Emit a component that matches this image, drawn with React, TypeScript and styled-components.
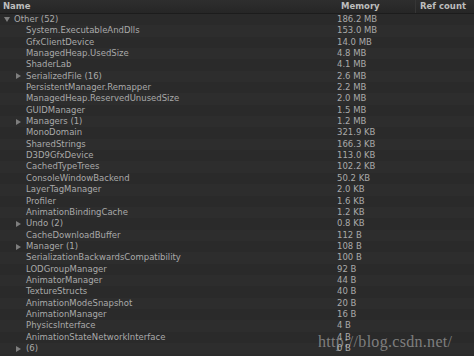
import styled, {createGlobalStyle} from "styled-components";

const GlobalStyle = createGlobalStyle`
  html, body {
    margin: 0;
    padding: 0;
    background: #2b2b2b;
  }
  body {
    font-family: "DejaVu Sans", Verdana, sans-serif;
  }
`;

type Item = {
    name: string
    mem: string
    depth: number
    fold?: "open" | "closed"
}

const items: Item[] = [
    {name: "Other (52)", mem: "186.2 MB", depth: 0, fold: "open"},
    {name: "System.ExecutableAndDlls", mem: "153.0 MB", depth: 1},
    {name: "GfxClientDevice", mem: "14.0 MB", depth: 1},
    {name: "ManagedHeap.UsedSize", mem: "4.8 MB", depth: 1},
    {name: "ShaderLab", mem: "4.1 MB", depth: 1},
    {name: "SerializedFile (16)", mem: "2.6 MB", depth: 1, fold: "closed"},
    {name: "PersistentManager.Remapper", mem: "2.2 MB", depth: 1},
    {name: "ManagedHeap.ReservedUnusedSize", mem: "2.0 MB", depth: 1},
    {name: "GUIDManager", mem: "1.5 MB", depth: 1},
    {name: "Managers (1)", mem: "1.2 MB", depth: 1, fold: "closed"},
    {name: "MonoDomain", mem: "321.9 KB", depth: 1},
    {name: "SharedStrings", mem: "166.3 KB", depth: 1},
    {name: "D3D9GfxDevice", mem: "113.0 KB", depth: 1},
    {name: "CachedTypeTrees", mem: "102.2 KB", depth: 1},
    {name: "ConsoleWindowBackend", mem: "50.2 KB", depth: 1},
    {name: "LayerTagManager", mem: "2.0 KB", depth: 1},
    {name: "Profiler", mem: "1.6 KB", depth: 1},
    {name: "AnimationBindingCache", mem: "1.2 KB", depth: 1},
    {name: "Undo (2)", mem: "0.8 KB", depth: 1, fold: "closed"},
    {name: "CacheDownloadBuffer", mem: "112 B", depth: 1},
    {name: "Manager (1)", mem: "108 B", depth: 1, fold: "closed"},
    {name: "SerializationBackwardsCompatibility", mem: "100 B", depth: 1},
    {name: "LODGroupManager", mem: "92 B", depth: 1},
    {name: "AnimatorManager", mem: "44 B", depth: 1},
    {name: "TextureStructs", mem: "40 B", depth: 1},
    {name: "AnimationModeSnapshot", mem: "20 B", depth: 1},
    {name: "AnimationManager", mem: "16 B", depth: 1},
    {name: "PhysicsInterface", mem: "4 B", depth: 1},
    {name: "AnimationStateNetworkInterface", mem: "4 B", depth: 1},
    {name: "(6)", mem: "0 B", depth: 1, fold: "closed"},
];

const Panel = styled.div`
  position: relative;
  width: 474px;
  height: 356px;
  overflow: hidden;
  background: #2b2b2b;
  color: #a9a9a9;
`;

const Header = styled.div`
  display: grid;
  grid-template-columns: 337px 78px 1fr;
  height: 13px;
  background: linear-gradient(#2e2e2e, #262626);
  border-bottom: 1px solid #1c1c1c;
  font-size: 8.5px;
  font-weight: bold;
  color: #bdbdbd;
  line-height: 13px;
`;

const HeadCell = styled.div<{ $pad: number; $sep?: boolean }>`
  padding-left: ${p => p.$pad}px;
  white-space: nowrap;
  border-left: ${p => p.$sep ? "1px solid #363636" : "none"};
`;

const Row = styled.div<{ $odd: boolean }>`
  display: grid;
  grid-template-columns: 337px 1fr;
  height: 11.35px;
  line-height: 11.35px;
  font-size: 8.5px;
  background: ${p => p.$odd ? "#2d2d2d" : "#2a2a2a"};
  white-space: nowrap;
`;

const NameCell = styled.div<{ $depth: number }>`
  display: flex;
  align-items: center;
  padding-left: ${p => 4 + p.$depth * 12}px;
  overflow: hidden;
`;

const Fold = styled.span<{ $open?: boolean; $hidden?: boolean }>`
  width: 10px;
  flex: none;
  display: flex;
  align-items: center;
  visibility: ${p => p.$hidden ? "hidden" : "visible"};
  &::before {
    content: "";
    display: block;
    ${p => p.$open
        ? "border-left: 3.5px solid transparent; border-right: 3.5px solid transparent; border-top: 5px solid #7e7e7e;"
        : "border-top: 3.5px solid transparent; border-bottom: 3.5px solid transparent; border-left: 5px solid #7e7e7e;"}
  }
`;

const MemCell = styled.div`
  padding-left: 0;
`;

const Watermark = styled.div`
  position: absolute;
  left: 318px;
  top: 333px;
  font-family: "Liberation Serif", serif;
  font-size: 16px;
  letter-spacing: 0.3px;
  color: rgba(210, 210, 210, 0.5);
  pointer-events: none;
`;

const App = () => {
    return (
        <>
            <GlobalStyle/>
            <Panel>
                <Header>
                    <HeadCell $pad={3}>Name</HeadCell>
                    <HeadCell $pad={4}>Memory</HeadCell>
                    <HeadCell $pad={4} $sep>Ref count</HeadCell>
                </Header>
                {items.map((it, i) => (
                    <Row key={i} $odd={i % 2 === 1}>
                        <NameCell $depth={it.depth}>
                            <Fold $open={it.fold === "open"} $hidden={!it.fold}/>
                            {it.name}
                        </NameCell>
                        <MemCell>{it.mem}</MemCell>
                    </Row>
                ))}
                <Watermark>http://blog.csdn.net/</Watermark>
            </Panel>
        </>
    );
}

export default App;
